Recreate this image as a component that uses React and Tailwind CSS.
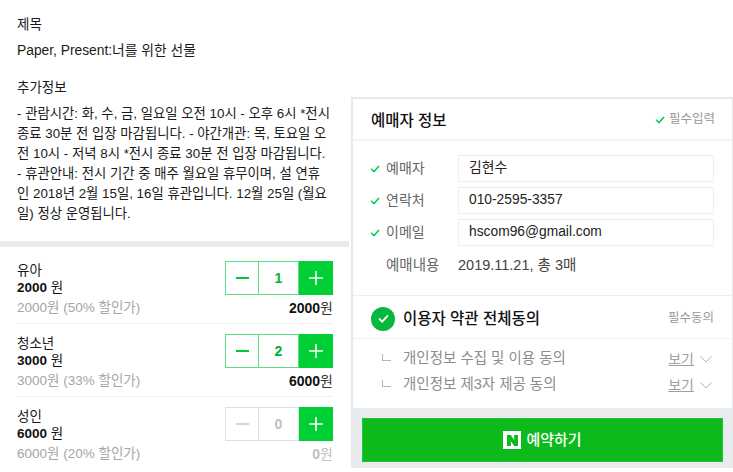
const FONT = { fontFamily: '"Liberation Sans","Noto Sans CJK KR",sans-serif' };

function Check({ className = "w-[10px] h-[8px]" }) {
  return (
    <svg viewBox="0 0 10 8" className={className} fill="none" stroke="#06c755" strokeWidth="1.5">
      <path d="M1 3.8 L4 6.6 L9 1" />
    </svg>
  );
}

function Stepper({ value, active }) {
  const b = active ? "border-[#5ce07f]" : "border-[#e0e0e0]";
  return (
    <div className="flex h-[34px] w-[108px]">
      <div className={`w-[34px] flex items-center justify-center border ${b}`}>
        <div className={`w-[13px] h-[2px] ${active ? "bg-[#00c73c]" : "bg-[#d4d4d4]"}`} />
      </div>
      <div className={`w-[40px] flex items-center justify-center border-y border-r ${b} text-[14px] font-bold ${active ? "text-[#00b32c]" : "text-[#bfbfbf]"}`}>
        {value}
      </div>
      <div className="w-[34px] bg-[#00cf36] flex items-center justify-center">
        <svg viewBox="0 0 14 14" className="w-[14px] h-[14px]" stroke="#fff" strokeWidth="1.6">
          <path d="M7 0V14M0 7H14" />
        </svg>
      </div>
    </div>
  );
}

function Ticket({ name, price, note, value, total, active, last }) {
  return (
    <div className={`flex justify-between h-[73px] pt-[10px] ${last ? "" : "border-b border-[#f0f0f0]"}`}>
      <div className="pt-[1px] text-[13.5px] leading-[17px]">
        <div className="text-[#1a1a1a]">{name}</div>
        <div className="font-bold text-[#111]">{price} <span className="font-normal">원</span></div>
        <div className="text-[#a5a5a5] mt-[2px] leading-[20px]">{note}</div>
      </div>
      <div className="flex flex-col items-end">
        <Stepper value={value} active={active} />
        <div className={`mt-[3px] text-[14px] leading-[20px] ${active ? "text-[#111]" : "text-[#bfbfbf]"}`}>
          <span className="font-bold">{total}</span>
          <span className={active ? "text-[#333]" : ""}>원</span>
        </div>
      </div>
    </div>
  );
}

function Field({ label, value }) {
  return (
    <div className="flex items-center h-[27px]">
      <div className="w-[16px] flex"><Check /></div>
      <div className="w-[72px] text-[14px] text-[#666]">{label}</div>
      <div className="w-[256px] h-[27px] border border-[#eeeeee] px-[10px] flex items-center text-[13.8px] text-[#222]">{value}</div>
    </div>
  );
}

function Term({ text }) {
  return (
    <div className="flex items-center h-[26px] text-[14.5px] text-[#8c8c8c]">
      <div className="w-[9px] h-[7px] ml-[12px] mr-[12px] mb-[3px] border-l border-b border-[#b5b5b5]" />
      <div className="flex-1">{text}</div>
      <span className="underline text-[#a0a0a0] text-[14px]">보기</span>
      <svg viewBox="0 0 12 7" className="w-[12px] h-[7px] ml-[6px] mr-[3px]" fill="none" stroke="#b5b5b5" strokeWidth="1">
        <path d="M.5 .5 L6 6 L11.5 .5" />
      </svg>
    </div>
  );
}

export default function App() {
  return (
    <div className="w-[733px] h-[472px] bg-white flex items-start overflow-hidden" style={FONT}>
      <div className="w-[349px] shrink-0">
        <div className="pl-[17px] pt-[15px] h-[241px] text-[13.5px] leading-[20px] text-[#1a1a1a]">
          <div>제목</div>
          <div className="mt-[6px] text-[13.8px]">Paper, Present:너를 위한 선물</div>
          <div className="mt-[17px]">추가정보</div>
          <div className="mt-[6px] text-[13.35px] whitespace-nowrap">
            - 관람시간: 화, 수, 금, 일요일 오전 10시 - 오후 6시 *전시<br />
            종료 30분 전 입장 마감됩니다. - 야간개관: 목, 토요일 오<br />
            전 10시 - 저녁 8시 *전시 종료 30분 전 입장 마감됩니다.<br />
            - 휴관안내: 전시 기간 중 매주 월요일 휴무이며, 설 연휴<br />
            인 2018년 2월 15일, 16일 휴관입니다. 12월 25일 (월요<br />
            일) 정상 운영됩니다.
          </div>
        </div>
        <div className="h-[6px] bg-[#e9ecef]" />
        <div className="pl-[17px] pr-[16px] pt-[4px]">
          <Ticket name="유아" price="2000" note="2000원 (50% 할인가)" value="1" total="2000" active />
          <Ticket name="청소년" price="3000" note="3000원 (33% 할인가)" value="2" total="6000" active />
          <Ticket name="성인" price="6000" note="6000원 (20% 할인가)" value="0" total="0" last />
        </div>
      </div>
      <div className="ml-[2px] mt-[97px] w-[382px] h-[371px] flex flex-col border-l-[2px] border-t-[2px] border-r border-[#e6e9ed]">
        <div className="h-[42px] shrink-0 pl-[18px] pr-[17px] flex items-center justify-between border-b-[2px] border-[#f2f3f5]">
          <div className="pt-[4px] text-[15.5px] font-medium text-[#111]">예매자 정보</div>
          <div className="pt-[1px] flex items-center gap-[4px] text-[12.5px] text-[#999]"><Check />필수입력</div>
        </div>
        <div className="pl-[17px] pr-[17px] pt-[14px] flex flex-col gap-[5px] h-[155px] shrink-0 border-b border-[#eeeeee]">
          <Field label="예매자" value="김현수" />
          <Field label="연락처" value="010-2595-3357" />
          <Field label="이메일" value="hscom96@gmail.com" />
          <div className="flex items-center h-[30px] text-[14.5px]">
            <div className="w-[16px]" />
            <div className="w-[72px] text-[#666]">예매내용</div>
            <div className="text-[#444]">2019.11.21, 총 3매</div>
          </div>
        </div>
        <div className="h-[43px] shrink-0 pl-[18px] pr-[18px] flex items-center justify-between border-b border-[#f0f0f0]">
          <div className="flex items-center gap-[8px] pt-[3px]">
            <div className="w-[24px] h-[24px] rounded-full bg-[#06b83f] flex items-center justify-center">
              <svg viewBox="0 0 12 10" className="w-[11px] h-[9px]" fill="none" stroke="#fff" strokeWidth="2"><path d="M1 5 L4.5 8.5 L11 1.5" /></svg>
            </div>
            <div className="text-[15.5px] font-medium text-[#111]">이용자 약관 전체동의</div>
          </div>
          <div className="pt-[3px] text-[12.5px] text-[#999]">필수동의</div>
        </div>
        <div className="h-[69px] shrink-0 pl-[17px] pr-[17px] pt-[7px]">
          <Term text="개인정보 수집 및 이용 동의" />
          <Term text="개인정보 제3자 제공 동의" />
        </div>
        <div className="flex-1 bg-[#e9ecef] pt-[10px] px-[9px]">
          <div className="h-[44px] bg-[#0cba1c] border border-[#22c233] flex items-center justify-center gap-[5px]">
            <div className="w-[18px] h-[18px] bg-white flex items-center justify-center">
              <svg viewBox="0 0 12 12" className="w-[11px] h-[11px]" fill="#0cba1c"><path d="M0 0H4.2L7.8 5.4V0H12V12H7.8L4.2 6.6V12H0Z" /></svg>
            </div>
            <span className="text-[15px] font-medium text-white">예약하기</span>
          </div>
        </div>
      </div>
    </div>
  );
}
